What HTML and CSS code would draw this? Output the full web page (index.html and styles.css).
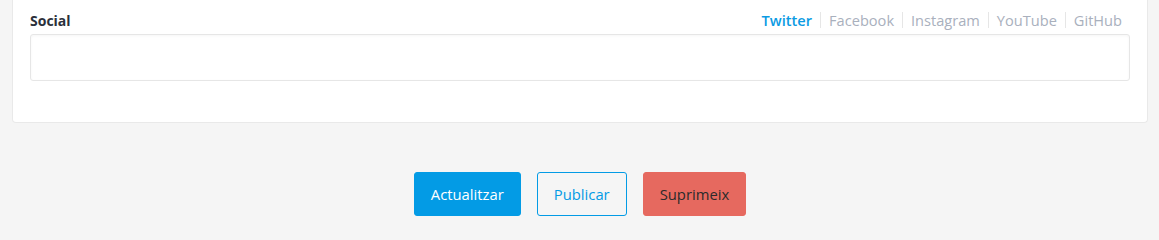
FILE: index.html
```html
<!DOCTYPE html>
<html lang="ca">
<head>
<meta charset="utf-8">
<title>Social</title>
<link rel="stylesheet" href="styles.css">
</head>
<body>
<div class="page">
  <section class="card">
    <div class="field-head">
      <label class="field-label">Social</label>
      <nav class="tabs">
        <span class="tab active">Twitter</span>
        <span class="tab">Facebook</span>
        <span class="tab">Instagram</span>
        <span class="tab">YouTube</span>
        <span class="tab">GitHub</span>
      </nav>
    </div>
    <div class="textarea"></div>
  </section>
  <div class="actions">
    <button class="btn btn-primary">Actualitzar</button>
    <button class="btn btn-outline">Publicar</button>
    <button class="btn btn-danger">Suprimeix</button>
  </div>
</div>
</body>
</html>
```

FILE: styles.css
```css
html, body {
  margin: 0;
  padding: 0;
  background: #f5f5f5;
  font-family: "Source Sans Pro", "Open Sans", "Liberation Sans", sans-serif;
  color: #2b303b;
}

.page {
  padding: 0 11px 0 12px;
}

.card {
  background: #fff;
  border: 1px solid #e9e9e9;
  border-top: 0;
  border-radius: 0 0 4px 4px;
  padding: 8px 17px 41px 17px;
}

.field-head {
  display: flex;
  justify-content: space-between;
  align-items: center;
  height: 24px;
  margin-bottom: 2px;
}

.field-label {
  font-size: 14px;
  font-weight: 700;
  color: #2b303b;
}

.tabs {
  display: flex;
  align-items: center;
  font-size: 14.6px;
}

.tab {
  color: #a9b0bd;
  padding: 0 8px;
  line-height: 16px;
  border-left: 1px solid #e6e6e6;
}

.tab:first-child {
  border-left: 0;
}

.tab.active {
  color: #0b9be3;
  font-weight: 600;
}

.textarea {
  height: 45px;
  border: 1px solid #e6e6e6;
  border-radius: 3px;
  box-shadow: inset 0 1px 3px rgba(0, 0, 0, 0.04);
  background: #fff;
}

.actions {
  display: flex;
  justify-content: center;
  gap: 16px;
  margin-top: 49px;
}

.btn {
  height: 44px;
  padding: 0 16px;
  border-radius: 3px;
  font-family: inherit;
  font-size: 14.8px;
  border: 1px solid transparent;
  cursor: pointer;
}

.btn-primary {
  background: #039be5;
  border-color: #039be5;
  color: #fff;
}

.btn-outline {
  background: transparent;
  border-color: #039be5;
  color: #039be5;
}

.btn-danger {
  background: #e6695f;
  border-color: #e6695f;
  color: #2b2b2b;
}
```
